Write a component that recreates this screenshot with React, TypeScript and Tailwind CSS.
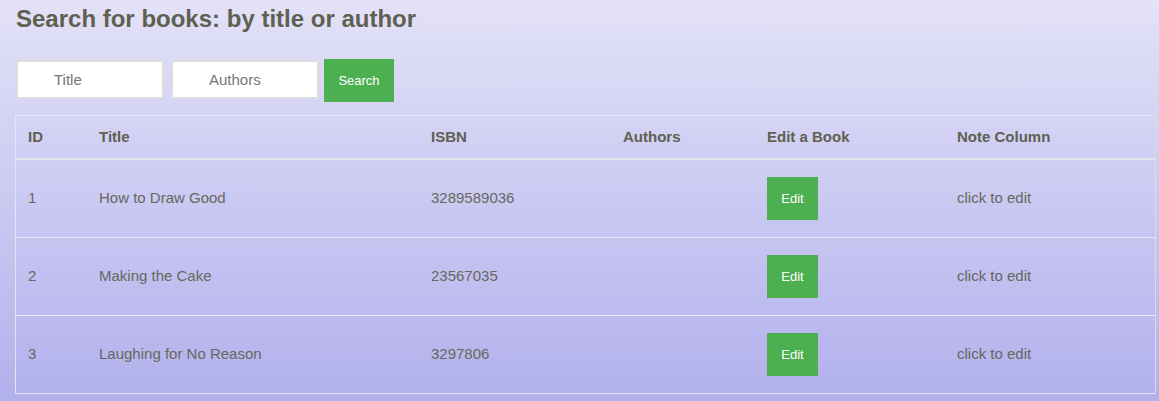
const books = [
  { id: 1, title: "How to Draw Good", isbn: "3289589036", authors: "" },
  { id: 2, title: "Making the Cake", isbn: "23567035", authors: "" },
  { id: 3, title: "Laughing for No Reason", isbn: "3297806", authors: "" },
];

const cols = "grid grid-cols-[71px_332px_192px_144px_190px_210px]";

export default function App() {
  return (
    <div
      className="min-h-[401px] w-full bg-gradient-to-b from-[#e3e2f7] to-[#b2b0ec] pb-[8px] text-[#67675e]"
      style={{ fontFamily: '"Liberation Sans", Arial, Helvetica, sans-serif' }}
    >
      <h1 className="ml-[16px] pt-[5px] text-[24px] font-bold leading-[28px] text-[#5f5f52]">
        Search for books: by title or author
      </h1>

      <form
        className="ml-[16px] mt-[26px] flex items-start"
        onSubmit={(e) => e.preventDefault()}
      >
        <input
          type="text"
          placeholder="Title"
          className="mt-[1px] mr-[7px] h-[39px] w-[148px] border-2 border-[#dddddd] bg-white pl-[36px] text-[15px] text-[#555] outline-none placeholder:text-[#767676]"
        />
        <input
          type="text"
          placeholder="Authors"
          className="mt-[1px] mr-[5px] h-[39px] w-[148px] border-2 border-[#dddddd] bg-white pl-[36px] text-[15px] text-[#555] outline-none placeholder:text-[#767676]"
        />
        <button
          type="submit"
          className="h-[43px] w-[70px] bg-[#4caf50] text-[13px] text-white"
        >
          Search
        </button>
      </form>

      <div className="ml-[15px] mt-[13px] w-[1141px] border border-[#e4e4f0] border-r-[#dcdce8]">
        {/* Header */}
        <div className={`${cols} h-[44px] items-center border-b-2 border-[#e6e6ee] text-[15px] font-bold text-[#5f5f52]`}>
          <div className="pl-[12px]">ID</div>
          <div className="pl-[12px]">Title</div>
          <div className="pl-[12px]">ISBN</div>
          <div className="pl-[12px]">Authors</div>
          <div className="pl-[12px]">Edit a Book</div>
          <div className="pl-[12px]">Note Column</div>
        </div>

        {books.map((b, i) => (
          <div
            key={b.id}
            className={`${cols} items-center text-[15px] ${
              i < books.length - 1 ? "h-[78px] border-b border-[#e8e8f5]" : "h-[77px]"
            }`}
          >
            <div className="pl-[12px]">{b.id}</div>
            <div className="pl-[12px]">{b.title}</div>
            <div className="pl-[12px]">{b.isbn}</div>
            <div className="pl-[12px]">{b.authors}</div>
            <div className="pl-[12px]">
              <button
                type="button"
                className="h-[43px] w-[51px] bg-[#4caf50] text-[13px] text-white"
              >
                Edit
              </button>
            </div>
            <div className="pl-[12px]">click to edit</div>
          </div>
        ))}
      </div>
    </div>
  );
}
